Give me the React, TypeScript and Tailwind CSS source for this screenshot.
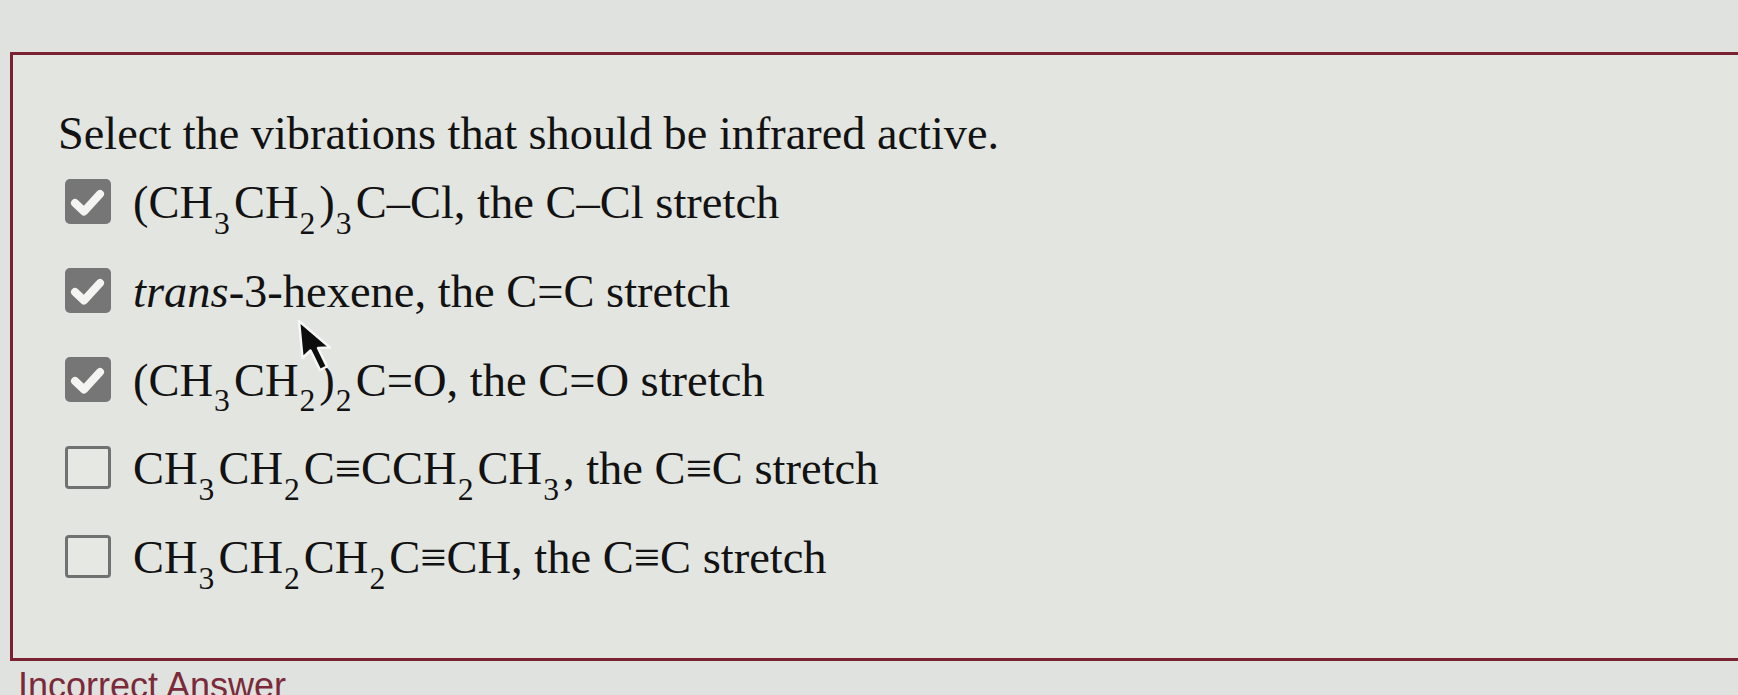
import React from 'react';

type Part = string | { sub: string } | { i: string };

const rows: { checked: boolean; parts: Part[] }[] = [
  {
    checked: true,
    parts: ['(CH', { sub: '3' }, 'CH', { sub: '2' }, ')', { sub: '3' }, 'C–Cl, the C–Cl stretch'],
  },
  {
    checked: true,
    parts: [{ i: 'trans' }, '-3-hexene, the C=C stretch'],
  },
  {
    checked: true,
    parts: ['(CH', { sub: '3' }, 'CH', { sub: '2' }, ')', { sub: '2' }, 'C=O, the C=O stretch'],
  },
  {
    checked: false,
    parts: ['CH', { sub: '3' }, 'CH', { sub: '2' }, 'C≡CCH', { sub: '2' }, 'CH', { sub: '3' }, ', the C≡C stretch'],
  },
  {
    checked: false,
    parts: ['CH', { sub: '3' }, 'CH', { sub: '2' }, 'CH', { sub: '2' }, 'C≡CH, the C≡C stretch'],
  },
];

const CheckBox = ({ checked }: { checked: boolean }) =>
  checked ? (
    <div className="w-[46px] h-[45px] shrink-0 rounded-[5px] bg-[#767676]">
      <svg width="46" height="45" viewBox="0 0 46 45">
        <path d="M10 24 L19 32.5 L35 15" fill="none" stroke="#f4f4f2" strokeWidth="8" strokeLinecap="round" strokeLinejoin="round" />
      </svg>
    </div>
  ) : (
    <div className="w-[46px] h-[43px] mt-[1px] shrink-0 rounded-[4px] border-[3px] border-[#717171] bg-[#e6e8e4]" />
  );

const Label = ({ parts }: { parts: Part[] }) => (
  <div className="text-[46.5px] leading-[56px] text-[#121212] whitespace-nowrap">
    {parts.map((p, i) => {
      if (typeof p === 'string') return <span key={i}>{p}</span>;
      if ('sub' in p)
        return (
          <sub key={i} className="text-[0.68em] bottom-[-0.5em] ml-[1px] mr-[4px]">
            {p.sub}
          </sub>
        );
      return (
        <i key={i} className="italic">
          {p.i}
        </i>
      );
    })}
  </div>
);

const Cursor = () => (
  <svg width="45" height="62" viewBox="0 0 45 62" className="absolute left-[295px] top-[317px]">
    <path
      d="M4 4 L7.5 41 L15.5 33.5 L25 53 L32 49.5 L23 31 L35 30.5 Z"
      fill="#0d0d0d"
      stroke="#f7f7f7"
      strokeWidth="2.5"
      strokeLinejoin="round"
    />
  </svg>
);

export default function App() {
  return (
    <div
      className="relative w-[1738px] h-[695px] overflow-hidden bg-[#dfe2de]"
      style={{ fontFamily: '"Liberation Serif", "Times New Roman", serif' }}
    >
      <div className="pt-[52px] pl-[10px]">
        <div className="h-[609px] border-t-[3px] border-l-[3px] border-b-[3px] border-[#7a2232] bg-[#e3e5e1] pl-[45px] pt-[51px]">
          <h1 className="text-[46.3px] leading-[56px] text-[#121212] whitespace-nowrap">
            Select the vibrations that should be infrared active.
          </h1>
          <div className="mt-[13px] pl-[7px] flex flex-col">
            {rows.map((r, i) => (
              <div key={i} className="h-[88.75px] flex items-start gap-[22px]">
                <div className="pt-[4px]">
                  <CheckBox checked={r.checked} />
                </div>
                <Label parts={r.parts} />
              </div>
            ))}
          </div>
        </div>
        <div
          className="pl-[8px] pt-[7px] text-[36px] leading-[36px] text-[#7b2a3a] whitespace-nowrap"
          style={{ fontFamily: '"Liberation Sans", Arial, sans-serif' }}
        >
          Incorrect Answer
        </div>
      </div>
      <Cursor />
    </div>
  );
}
